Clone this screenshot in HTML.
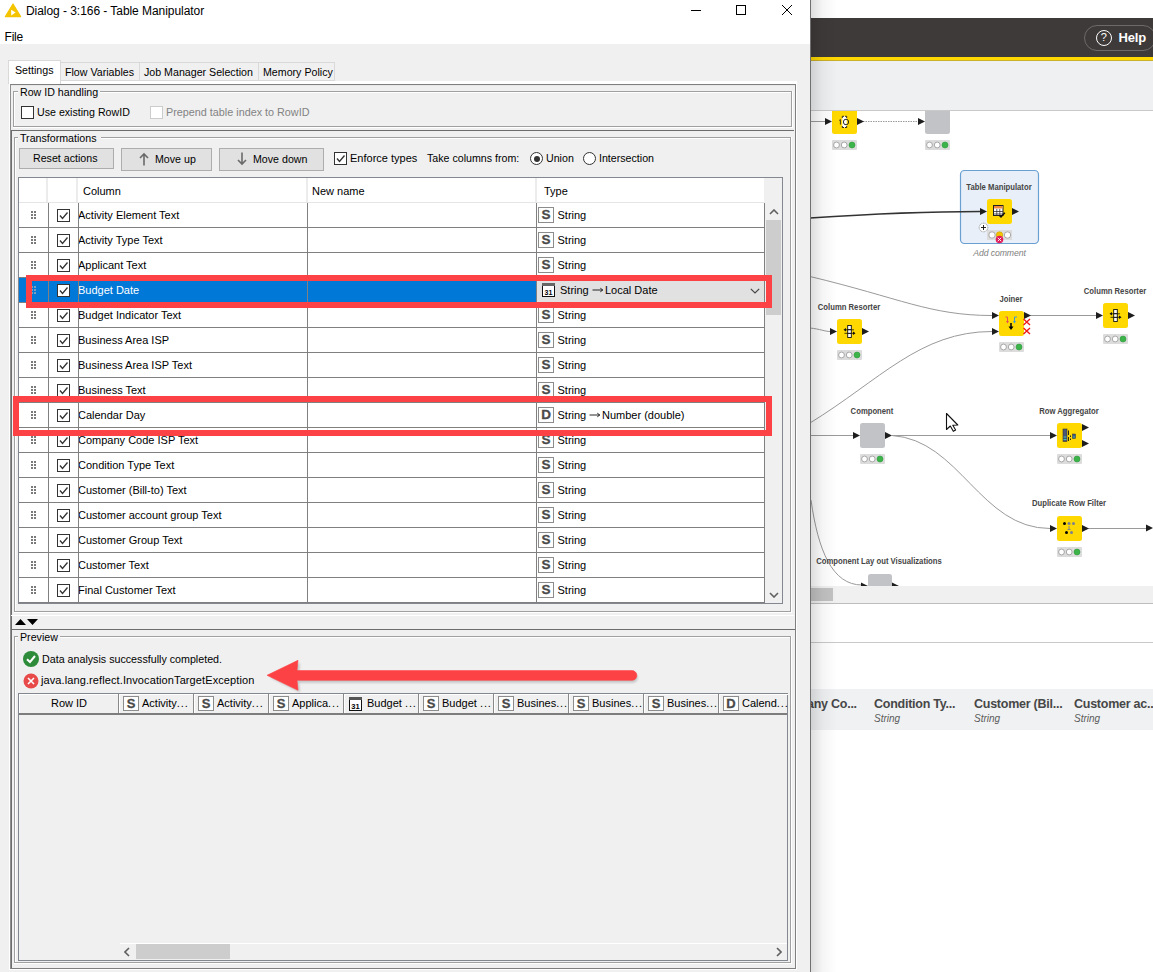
<!DOCTYPE html><html><head><meta charset="utf-8"><style>
*{box-sizing:border-box;margin:0;padding:0}
html,body{width:1153px;height:972px;overflow:hidden;background:#fff;font-family:"Liberation Sans",sans-serif;color:#000}
.ab{position:absolute}
.t{position:absolute;white-space:nowrap;font-size:11px;line-height:13px;letter-spacing:-0.2px}
.cb{position:absolute;width:13px;height:13px;border:1px solid #333;background:#fff}
.ti{position:absolute;width:15px;height:14px;border:1px solid #8c8c8c;background:#fff;font-weight:bold;font-size:13px;line-height:12px;text-align:center;color:#555}
.lbl{position:absolute;white-space:nowrap;font-size:9.5px;font-weight:bold;color:#454545;transform:translateX(-50%) scaleX(0.855);line-height:12px}
.node{position:absolute;width:25px;height:24px;border-radius:3px;background:#ffd800}
.stat{position:absolute;width:25px;height:10px;background:#dcdcdc}
</style></head><body>

<div class="ab" style="left:810px;top:0px;width:343px;height:972px;background:#fff"></div>
<div class="ab" style="left:810px;top:18px;width:343px;height:39px;background:#3e3a39"></div>
<div class="ab" style="left:810px;top:57px;width:343px;height:3px;background:#ffd800"></div>
<div class="ab" style="left:810px;top:60px;width:343px;height:50px;background:#eff0f2"></div>
<div class="ab" style="left:810px;top:60px;width:343px;height:1px;background:#cbb02a"></div>
<div class="ab" style="left:810px;top:110px;width:343px;height:1px;background:#c9c9c9"></div>
<div class="ab" style="left:1084px;top:25px;width:72px;height:26px;border:1px solid #6d6a69;border-radius:13px"></div>
<div class="ab" style="left:1096px;top:29.5px;width:16px;height:16px;border:1.3px solid #fff;border-radius:50%"></div>
<div class="t" style="left:1100.8px;top:31px;color:#fff;font-size:11px;line-height:13px">?</div>
<div class="t" style="left:1118.5px;top:29.8px;color:#fff;font-size:13px;font-weight:bold;line-height:16px;letter-spacing:-0.2px">Help</div>
<svg class="ab" style="left:810px;top:111px" width="343" height="475" viewBox="810 111 343 475"><rect x="960.5" y="170.5" width="78" height="73" rx="4" fill="#e8eff8" stroke="#6a9fd2" stroke-width="1.2"/><g fill="none" stroke="#9a9a9a" stroke-width="1"><path d="M810 276.5 C 900 298, 930 315.5, 992 315.5"/><path d="M810 328 C 820 329, 825 331.5, 830 331.5"/><path d="M810 423 C 880 380, 920 331.5, 992 331.5"/><path d="M810 435.5 L 853 435.5"/><path d="M892 435.5 L 1050 435.5"/><path d="M892 435.5 C 960 440, 980 528.5, 1050 528.5"/><path d="M1030 315.5 L 1096 315.5"/><path d="M1088 528.5 L 1146 528.5"/><path d="M811 500 C 818 550, 832 585, 862 585"/><path d="M810 121.5 L 825 121.5"/></g><path d="M863 121.5 L 918 121.5" stroke="#9a9a9a" stroke-dasharray="1.5 1" fill="none"/><path d="M810 218 C 870 214, 930 211.5, 980 211.5" stroke="#333" stroke-width="1.6" fill="none"/><rect x="832" y="109" width="25" height="25" rx="2.5" fill="#ffd800"/><path d="M825 118.0 L832 121.5 L825 125.0Z" fill="#1e1e1e"/><path d="M857 118.0 L864 121.5 L857 125.0Z" fill="#1e1e1e"/><rect x="832" y="140" width="25" height="10" rx="1" fill="#dcdcdc"/><circle cx="836.5" cy="145" r="2.9" fill="#fff" stroke="#888" stroke-width="0.7"/><circle cx="844.2" cy="145" r="2.9" fill="#fff" stroke="#888" stroke-width="0.7"/><circle cx="852" cy="145" r="3" fill="#3cb44a" stroke="#2e9a3c" stroke-width="0.6"/><rect x="925" y="109" width="25" height="25" rx="2.5" fill="#c1c3c6"/><path d="M918 118.0 L925 121.5 L918 125.0Z" fill="#1e1e1e"/><rect x="925" y="140" width="25" height="10" rx="1" fill="#dcdcdc"/><circle cx="929.5" cy="145" r="2.9" fill="#fff" stroke="#888" stroke-width="0.7"/><circle cx="937.2" cy="145" r="2.9" fill="#fff" stroke="#888" stroke-width="0.7"/><circle cx="945" cy="145" r="3" fill="#3cb44a" stroke="#2e9a3c" stroke-width="0.6"/><rect x="987" y="199" width="25" height="25" rx="2.5" fill="#ffd800"/><path d="M980 208.0 L987 211.5 L980 215.0Z" fill="#1e1e1e"/><path d="M1012 208.0 L1019 211.5 L1012 215.0Z" fill="#1e1e1e"/><rect x="837" y="319" width="25" height="25" rx="2.5" fill="#ffd800"/><path d="M830 328.0 L837 331.5 L830 335.0Z" fill="#1e1e1e"/><path d="M862 328.0 L869 331.5 L862 335.0Z" fill="#1e1e1e"/><rect x="837" y="350" width="25" height="10" rx="1" fill="#dcdcdc"/><circle cx="841.5" cy="355" r="2.9" fill="#fff" stroke="#888" stroke-width="0.7"/><circle cx="849.2" cy="355" r="2.9" fill="#fff" stroke="#888" stroke-width="0.7"/><circle cx="857" cy="355" r="3" fill="#3cb44a" stroke="#2e9a3c" stroke-width="0.6"/><rect x="999" y="311" width="25" height="25" rx="2.5" fill="#ffd800"/><path d="M992 312.0 L999 315.5 L992 319.0Z" fill="#1e1e1e"/><path d="M992 328.0 L999 331.5 L992 335.0Z" fill="#1e1e1e"/><path d="M1024 312.0 L1031 315.5 L1024 319.0Z" fill="#1e1e1e"/><rect x="999" y="342" width="25" height="10" rx="1" fill="#dcdcdc"/><circle cx="1003.5" cy="347" r="2.9" fill="#fff" stroke="#888" stroke-width="0.7"/><circle cx="1011.2" cy="347" r="2.9" fill="#fff" stroke="#888" stroke-width="0.7"/><circle cx="1019" cy="347" r="3" fill="#3cb44a" stroke="#2e9a3c" stroke-width="0.6"/><rect x="1103" y="303" width="25" height="25" rx="2.5" fill="#ffd800"/><path d="M1096 312.0 L1103 315.5 L1096 319.0Z" fill="#1e1e1e"/><path d="M1128 312.0 L1135 315.5 L1128 319.0Z" fill="#1e1e1e"/><rect x="1103" y="334" width="25" height="10" rx="1" fill="#dcdcdc"/><circle cx="1107.5" cy="339" r="2.9" fill="#fff" stroke="#888" stroke-width="0.7"/><circle cx="1115.2" cy="339" r="2.9" fill="#fff" stroke="#888" stroke-width="0.7"/><circle cx="1123" cy="339" r="3" fill="#3cb44a" stroke="#2e9a3c" stroke-width="0.6"/><rect x="860" y="423" width="25" height="25" rx="2.5" fill="#c1c3c6"/><path d="M853 432.0 L860 435.5 L853 439.0Z" fill="#1e1e1e"/><path d="M885 432.0 L892 435.5 L885 439.0Z" fill="#1e1e1e"/><rect x="860" y="454" width="25" height="10" rx="1" fill="#dcdcdc"/><circle cx="864.5" cy="459" r="2.9" fill="#fff" stroke="#888" stroke-width="0.7"/><circle cx="872.2" cy="459" r="2.9" fill="#fff" stroke="#888" stroke-width="0.7"/><circle cx="880" cy="459" r="3" fill="#3cb44a" stroke="#2e9a3c" stroke-width="0.6"/><rect x="1057" y="423" width="25" height="25" rx="2.5" fill="#ffd800"/><path d="M1050 432.0 L1057 435.5 L1050 439.0Z" fill="#1e1e1e"/><path d="M1082 424.0 L1089 427.5 L1082 431.0Z" fill="#1e1e1e"/><path d="M1082 440.0 L1089 443.5 L1082 447.0Z" fill="#1e1e1e"/><rect x="1057" y="454" width="25" height="10" rx="1" fill="#dcdcdc"/><circle cx="1061.5" cy="459" r="2.9" fill="#fff" stroke="#888" stroke-width="0.7"/><circle cx="1069.2" cy="459" r="2.9" fill="#fff" stroke="#888" stroke-width="0.7"/><circle cx="1077" cy="459" r="3" fill="#3cb44a" stroke="#2e9a3c" stroke-width="0.6"/><rect x="1057" y="516" width="25" height="25" rx="2.5" fill="#ffd800"/><path d="M1050 525.0 L1057 528.5 L1050 532.0Z" fill="#1e1e1e"/><path d="M1082 525.0 L1089 528.5 L1082 532.0Z" fill="#1e1e1e"/><rect x="1057" y="547" width="25" height="10" rx="1" fill="#dcdcdc"/><circle cx="1061.5" cy="552" r="2.9" fill="#fff" stroke="#888" stroke-width="0.7"/><circle cx="1069.2" cy="552" r="2.9" fill="#fff" stroke="#888" stroke-width="0.7"/><circle cx="1077" cy="552" r="3" fill="#3cb44a" stroke="#2e9a3c" stroke-width="0.6"/><rect x="868" y="574" width="24" height="20" rx="2.5" fill="#c1c3c6"/><path d="M861 582.5 L868 586 L861 589.5Z" fill="#1e1e1e"/><path d="M892 582.5 L899 586 L892 589.5Z" fill="#1e1e1e"/><rect x="987" y="230" width="25" height="10" fill="#dcdcdc"/><circle cx="992" cy="235" r="3.2" fill="#fff" stroke="#8a8a8a" stroke-width="0.7"/><circle cx="999.5" cy="235" r="3.2" fill="#f5c400" stroke="#d0a800" stroke-width="0.7"/><circle cx="1007.5" cy="235" r="3.2" fill="#fff" stroke="#8a8a8a" stroke-width="0.7"/><circle cx="999.5" cy="239.5" r="3.8" fill="#e0205a"/><path d="M997.8 237.8 L1001.2 241.2 M1001.2 237.8 L997.8 241.2" stroke="#fff" stroke-width="0.9"/><circle cx="983.5" cy="227.5" r="4.3" fill="#fff" stroke="#777" stroke-width="0.7" stroke-dasharray="1 0.6"/><path d="M981 227.5 H986 M983.5 225 V230" stroke="#111" stroke-width="0.9"/><path d="M839.2 120.5 L840.4 119.5 V124.6" stroke="#222" stroke-width="0.9" fill="none"/><rect x="842.3" y="116.3" width="4.4" height="11.2" fill="#fff"/><path d="M842.3 118 V116.3 H844 M845 116.3 H846.7 V118 M842.3 126 V127.5 H844 M845 127.5 H846.7 V126" stroke="#111" stroke-width="0.9" fill="none"/><ellipse cx="846" cy="122" rx="2.6" ry="2.8" fill="none" stroke="#111" stroke-width="0.9"/><rect x="993.5" y="205.5" width="9.5" height="10" fill="#fff" stroke="#222" stroke-width="1"/><rect x="994" y="206" width="8.5" height="2.5" fill="#f08a3c"/><path d="M994 211.5 H1003 M994 214 H1003 M996.8 209 V215.5 M999.8 209 V215.5" stroke="#333" stroke-width="0.8"/><path d="M999.5 215.5 L1001 217 L1004.8 212.8" stroke="#111" stroke-width="1.5" fill="none"/><rect x="847.7" y="325.5" width="3.6" height="12" fill="#fff" stroke="#111" stroke-width="0.9"/><path d="M847.7 329.5 H851.3 M847.7 333.5 H851.3" stroke="#111" stroke-width="0.8"/><path d="M844.5 329.8 H854.0 M844.5 333.3 H854.5" stroke="#111" stroke-width="0.8"/><path d="M843.5 329.8 L846.0 328.0 L846.0 331.6Z M855.5 333.3 L853.0 331.5 L853.0 335.1Z" fill="#111"/><rect x="1113.7" y="309.5" width="3.6" height="12" fill="#fff" stroke="#111" stroke-width="0.9"/><path d="M1113.7 313.5 H1117.3 M1113.7 317.5 H1117.3" stroke="#111" stroke-width="0.8"/><path d="M1110.5 313.8 H1120.0 M1110.5 317.3 H1120.5" stroke="#111" stroke-width="0.8"/><path d="M1109.5 313.8 L1112.0 312.0 L1112.0 315.6Z M1121.5 317.3 L1119.0 315.5 L1119.0 319.1Z" fill="#111"/><path d="M1005.5 317 H1007.5 V322" stroke="#e8505a" stroke-width="1" fill="none"/><path d="M1006 321 L1007.5 323.5 L1009 321Z" fill="#e8505a"/><path d="M1017 317 H1014.5 V322" stroke="#3a9ad8" stroke-width="1" fill="none"/><path d="M1013 321 L1014.5 323.5 L1016 321Z" fill="#3a9ad8"/><path d="M1011 323 V328" stroke="#000" stroke-width="1.5"/><path d="M1008.5 326.5 L1011 330 L1013.5 326.5Z" fill="#000"/><path d="M1023.5 319 L1030 325 M1030 319 L1023.5 325 M1023.5 328 L1030 334 M1030 328 L1023.5 334" stroke="#f01a1a" stroke-width="1.4"/><rect x="1063" y="429" width="4" height="12.5" fill="#4a5878" stroke="#333" stroke-width="0.6"/><path d="M1063.5 437 H1066.5 M1063.5 439.5 H1066.5" stroke="#3cc0c0" stroke-width="1"/><path d="M1068.5 430.5 V435 M1068.5 437 V441 M1070.5 435.5 V437 M1070.5 438.5 V440" stroke="#111" stroke-width="0.9"/><rect x="1072.5" y="434" width="3" height="4.5" fill="#3a5a88" stroke="#333" stroke-width="0.5"/><path d="M1073 437 H1075" stroke="#3cc0c0" stroke-width="0.8"/><circle cx="1064.5" cy="523.4" r="1.5" fill="#000"/><circle cx="1069" cy="523.4" r="1.5" fill="#7a8090"/><circle cx="1073.5" cy="523.4" r="1.5" fill="#7a8090"/><circle cx="1066.5" cy="532.5" r="1.5" fill="#000"/><circle cx="1071.5" cy="532.5" r="1.5" fill="#7a8090"/><path d="M1069 526 V529.5 M1067.5 529.5 H1070.5" stroke="#7a8090" stroke-width="0.9"/></svg>
<div class="lbl" style="left:999px;top:181px;transform:translateX(-50%) scaleX(0.81)">Table Manipulator</div>
<div class="lbl" style="left:849px;top:301px;transform:translateX(-50%) scaleX(0.81)">Column Resorter</div>
<div class="lbl" style="left:1011px;top:293px;transform:translateX(-50%) scaleX(0.81)">Joiner</div>
<div class="lbl" style="left:1115px;top:285px;transform:translateX(-50%) scaleX(0.81)">Column Resorter</div>
<div class="lbl" style="left:872px;top:405px;transform:translateX(-50%) scaleX(0.81)">Component</div>
<div class="lbl" style="left:1069px;top:405px;transform:translateX(-50%) scaleX(0.81)">Row Aggregator</div>
<div class="lbl" style="left:1069px;top:497px;transform:translateX(-50%) scaleX(0.81)">Duplicate Row Filter</div>
<div class="lbl" style="left:879px;top:555px;transform:translateX(-50%) scaleX(0.81)">Component Lay out Visualizations</div>
<div class="t" style="left:999.5px;top:246.5px;transform:translateX(-50%);font-size:8.7px;font-style:italic;color:#808080;letter-spacing:-0.1px">Add comment</div>
<div class="ab" style="left:810px;top:586px;width:343px;height:17px;background:#f0f0f0"></div>
<div class="ab" style="left:810px;top:588px;width:23px;height:13px;background:#c2c2c2"></div>
<div class="ab" style="left:810px;top:603px;width:343px;height:1px;background:#bdbdbd"></div>
<div class="ab" style="left:810px;top:642px;width:343px;height:1px;background:#c9c9c9"></div>
<div class="ab" style="left:810px;top:689px;width:343px;height:41px;background:#f0f1f3"></div>
<div class="t" style="left:807px;top:698px;font-size:12.5px;font-weight:bold;color:#474747;letter-spacing:-0.25px">any Co...</div>
<div class="t" style="left:874px;top:698px;font-size:12.5px;font-weight:bold;color:#474747;letter-spacing:-0.25px">Condition Ty...</div>
<div class="t" style="left:874px;top:712px;font-size:10px;font-style:italic;color:#5a5a5a;letter-spacing:0">String</div>
<div class="t" style="left:974px;top:698px;font-size:12.5px;font-weight:bold;color:#474747;letter-spacing:-0.25px">Customer (Bil...</div>
<div class="t" style="left:974px;top:712px;font-size:10px;font-style:italic;color:#5a5a5a;letter-spacing:0">String</div>
<div class="t" style="left:1074px;top:698px;font-size:12.5px;font-weight:bold;color:#474747;letter-spacing:-0.25px">Customer ac...</div>
<div class="t" style="left:1074px;top:712px;font-size:10px;font-style:italic;color:#5a5a5a;letter-spacing:0">String</div>
<div class="ab" style="left:811px;top:0px;width:26px;height:972px;background:linear-gradient(to right,rgba(0,0,0,0.13),rgba(0,0,0,0.04) 45%,rgba(0,0,0,0))"></div>
<svg class="ab" style="left:935px;top:405px" width="30" height="30" viewBox="935 405 30 30"><path d="M946.5 413.5 L946.5 429.5 L950.3 426 L953.3 431.3 L955.6 430 L952.8 425.2 L957.8 425 Z" fill="#fff" stroke="#111" stroke-width="1.1" stroke-linejoin="round"/></svg>
<svg class="ab" style="left:1140px;top:520px" width="13" height="16"><path d="M6 4.5 L13 8 L6 11.5Z" fill="#1e1e1e"/></svg>

<div class="ab" style="left:0px;top:0px;width:811px;height:972px;background:#f0f0f0"></div>
<div class="ab" style="left:0px;top:0px;width:810px;height:44px;background:#fff"></div>
<div class="ab" style="left:810px;top:0px;width:1px;height:972px;background:#707070"></div>
<svg class="ab" style="left:4px;top:3px" width="18" height="15"><path d="M9 1 L16.6 13.6 L1.4 13.6Z" fill="#f5c400" stroke="#f5c400" stroke-width="1.2" stroke-linejoin="round"/><path d="M7.2 6.8 L11.6 9.6 L7.2 12.4Z" fill="#fff"/></svg>
<div class="t" style="left:26px;top:4px;font-size:12px;line-height:15px;letter-spacing:-0.05px">Dialog - 3:166 - Table Manipulator</div>
<div class="ab" style="left:691px;top:10px;width:10px;height:1px;background:#000"></div>
<div class="ab" style="left:736px;top:5px;width:10px;height:10px;border:1px solid #000"></div>
<svg class="ab" style="left:782px;top:5px" width="10" height="10"><path d="M0 0L10 10M10 0L0 10" stroke="#000" stroke-width="1"/></svg>
<div class="t" style="left:4.5px;top:29.5px;font-size:12px;line-height:15px">File</div>
<div class="ab" style="left:60px;top:62px;width:80px;height:19px;background:#f0f0f0;border:1px solid #d9d9d9"></div>
<div class="t" style="left:65px;top:66px;font-size:10.65px;letter-spacing:0">Flow Variables</div>
<div class="ab" style="left:139px;top:62px;width:120px;height:19px;background:#f0f0f0;border:1px solid #d9d9d9"></div>
<div class="t" style="left:144px;top:66px;font-size:10.65px;letter-spacing:0">Job Manager Selection</div>
<div class="ab" style="left:258px;top:62px;width:77px;height:19px;background:#f0f0f0;border:1px solid #d9d9d9"></div>
<div class="t" style="left:263px;top:66px;font-size:10.65px;letter-spacing:0">Memory Policy</div>
<div class="ab" style="left:9px;top:81px;width:788px;height:889px;border:1px solid #fff;border-top:3px solid #fff"></div>
<div class="ab" style="left:10px;top:84px;width:786px;height:885px;border:1px solid #7f7f7f;border-left-color:#8f8f8f"></div>
<div class="ab" style="left:11px;top:85px;width:784px;height:883px;border-top:1px solid #e8e8e8"></div>
<div class="ab" style="left:11px;top:130px;width:1px;height:838px;background:#6d6d6d"></div>
<div class="ab" style="left:8px;top:60px;width:53px;height:24px;background:#fff;border:1px solid #d9d9d9;border-bottom:none"></div>
<div class="t" style="left:15px;top:64px;font-size:10.65px;letter-spacing:0">Settings</div>
<div class="ab" style="left:13px;top:91px;width:779px;height:36px;border:1px solid #a0a0a0"></div>
<div class="ab" style="left:14px;top:92px;width:777px;height:34px;border:1px solid #fff;border-right:none;border-bottom:none"></div>
<div class="ab" style="left:13px;top:127px;width:780px;height:1px;background:#fff"></div>
<div class="ab" style="left:792px;top:91px;width:1px;height:37px;background:#fff"></div>
<div class="ab" style="left:18px;top:89px;width:82px;height:5px;background:#f0f0f0"></div>
<div class="t" style="left:20px;top:86px;font-size:10.65px;letter-spacing:0">Row ID handling</div>
<div class="ab" style="left:21px;top:106px;width:13px;height:13px;border:1px solid #333;background:#fff"></div>
<div class="t" style="left:37px;top:106px;font-size:10.65px;letter-spacing:0">Use existing RowID</div>
<div class="ab" style="left:150px;top:106px;width:13px;height:13px;border:1px solid #cccccc;background:#fff"></div>
<div class="t" style="left:166px;top:106px;font-size:10.65px;letter-spacing:0;color:#838383;font-size:10.8px">Prepend table index to RowID</div>
<div class="ab" style="left:11px;top:130px;width:783px;height:1px;background:#6d6d6d"></div>
<div class="ab" style="left:14px;top:137px;width:777px;height:475px;border:1px solid #a0a0a0"></div>
<div class="ab" style="left:15px;top:138px;width:775px;height:473px;border:1px solid #fff;border-right:none;border-bottom:none"></div>
<div class="ab" style="left:14px;top:612px;width:778px;height:1px;background:#fff"></div>
<div class="ab" style="left:791px;top:137px;width:1px;height:476px;background:#fff"></div>
<div class="ab" style="left:18px;top:135px;width:83px;height:5px;background:#f0f0f0"></div>
<div class="t" style="left:20px;top:132px;font-size:10.65px;letter-spacing:0">Transformations</div>
<div class="ab" style="left:19px;top:148px;width:95px;height:21px;background:#e1e1e1;border:1px solid #adadad"></div>
<div class="t" style="left:33px;top:152px;font-size:10.65px;letter-spacing:0">Reset actions</div>
<div class="ab" style="left:121px;top:148px;width:91px;height:23px;background:#e1e1e1;border:1px solid #adadad"></div>
<div class="t" style="left:155px;top:153px;font-size:10.65px;letter-spacing:0">Move up</div>
<div class="ab" style="left:219px;top:148px;width:105px;height:23px;background:#e1e1e1;border:1px solid #adadad"></div>
<div class="t" style="left:253px;top:153px;font-size:10.65px;letter-spacing:0">Move down</div>
<svg class="ab" style="left:139px;top:152px" width="10" height="14"><path d="M5 2 V13.5 M1 6 L5 2 L9 6" stroke="#6a6a6a" stroke-width="1.6" fill="none"/></svg>
<svg class="ab" style="left:237px;top:152px" width="10" height="14"><path d="M5 0.5 V12 M1 8 L5 12 L9 8" stroke="#6a6a6a" stroke-width="1.6" fill="none"/></svg>
<div class="ab" style="left:334px;top:152px;width:13px;height:13px;border:1px solid #333;background:#fff"></div>
<svg class="ab" style="left:335px;top:153px" width="11" height="11"><path d="M2 5.5 L4.5 8.5 L9.5 2.5" stroke="#333" stroke-width="1.35" fill="none"/></svg>
<div class="t" style="left:350px;top:152px;font-size:11px;letter-spacing:0">Enforce types</div>
<div class="t" style="left:427px;top:152px;font-size:10.65px;letter-spacing:0">Take columns from:</div>
<div class="ab" style="left:530px;top:152px;width:13px;height:13px;border:1px solid #333;border-radius:50%;background:#fff"></div>
<div class="ab" style="left:533.5px;top:155.5px;width:6px;height:6px;background:#333;border-radius:50%"></div>
<div class="t" style="left:546px;top:152px;font-size:10.65px;letter-spacing:0">Union</div>
<div class="ab" style="left:583px;top:152px;width:13px;height:13px;border:1px solid #333;border-radius:50%;background:#fff"></div>
<div class="t" style="left:599px;top:152px;font-size:10.65px;letter-spacing:0">Intersection</div>
<div class="ab" style="left:18px;top:177px;width:765px;height:427px;background:#f0f0f0;border:1px solid #828790"></div>
<div class="ab" style="left:19px;top:178px;width:745px;height:24px;background:#fff"></div>
<div class="ab" style="left:19px;top:202px;width:745px;height:1px;background:#e5e5e5"></div>
<div class="ab" style="left:46px;top:178px;width:2px;height:24px;background:#ececec"></div>
<div class="ab" style="left:76px;top:178px;width:2px;height:24px;background:#ececec"></div>
<div class="ab" style="left:306px;top:178px;width:2px;height:24px;background:#ececec"></div>
<div class="ab" style="left:535px;top:178px;width:2px;height:24px;background:#ececec"></div>
<div class="t" style="left:83px;top:185px;font-size:11px;letter-spacing:0">Column</div>
<div class="t" style="left:312px;top:185px;font-size:11px;letter-spacing:0">New name</div>
<div class="t" style="left:544px;top:185px;font-size:11px;letter-spacing:0">Type</div>
<div class="ab" style="left:19px;top:203px;width:746px;height:399px;background:#fff"></div>
<div class="ab" style="left:19px;top:227px;width:746px;height:1px;background:#808080"></div>
<div class="ab" style="left:31px;top:211px;width:2px;height:2px;background:#7a7a7a"></div>
<div class="ab" style="left:31px;top:214px;width:2px;height:2px;background:#7a7a7a"></div>
<div class="ab" style="left:31px;top:217px;width:2px;height:2px;background:#7a7a7a"></div>
<div class="ab" style="left:34px;top:211px;width:2px;height:2px;background:#7a7a7a"></div>
<div class="ab" style="left:34px;top:214px;width:2px;height:2px;background:#7a7a7a"></div>
<div class="ab" style="left:34px;top:217px;width:2px;height:2px;background:#7a7a7a"></div>
<div class="ab" style="left:57px;top:209px;width:13px;height:13px;border:1px solid #333;background:#fff"></div>
<svg class="ab" style="left:58px;top:210px" width="11" height="11"><path d="M2 5.5 L4.5 8.5 L9.5 2.5" stroke="#333" stroke-width="1.3" fill="none"/></svg>
<div class="t" style="left:78px;top:209px;font-size:11px;letter-spacing:0">Activity Element Text</div>
<div class="ab" style="left:538px;top:207px;width:16px;height:16px;border:1px solid #8c8c8c;background:#fff"></div>
<div class="t" style="left:538px;top:207px;font-size:13.5px;font-weight:bold;color:#4a4a4a;width:16px;text-align:center;line-height:16px;letter-spacing:0;-webkit-text-stroke:0.3px #4a4a4a">S</div>
<div class="t" style="left:557.5px;top:209px;font-size:11px;letter-spacing:0">String</div>
<div class="ab" style="left:19px;top:252px;width:746px;height:1px;background:#808080"></div>
<div class="ab" style="left:31px;top:236px;width:2px;height:2px;background:#7a7a7a"></div>
<div class="ab" style="left:31px;top:239px;width:2px;height:2px;background:#7a7a7a"></div>
<div class="ab" style="left:31px;top:242px;width:2px;height:2px;background:#7a7a7a"></div>
<div class="ab" style="left:34px;top:236px;width:2px;height:2px;background:#7a7a7a"></div>
<div class="ab" style="left:34px;top:239px;width:2px;height:2px;background:#7a7a7a"></div>
<div class="ab" style="left:34px;top:242px;width:2px;height:2px;background:#7a7a7a"></div>
<div class="ab" style="left:57px;top:234px;width:13px;height:13px;border:1px solid #333;background:#fff"></div>
<svg class="ab" style="left:58px;top:235px" width="11" height="11"><path d="M2 5.5 L4.5 8.5 L9.5 2.5" stroke="#333" stroke-width="1.3" fill="none"/></svg>
<div class="t" style="left:78px;top:234px;font-size:11px;letter-spacing:0">Activity Type Text</div>
<div class="ab" style="left:538px;top:232px;width:16px;height:16px;border:1px solid #8c8c8c;background:#fff"></div>
<div class="t" style="left:538px;top:232px;font-size:13.5px;font-weight:bold;color:#4a4a4a;width:16px;text-align:center;line-height:16px;letter-spacing:0;-webkit-text-stroke:0.3px #4a4a4a">S</div>
<div class="t" style="left:557.5px;top:234px;font-size:11px;letter-spacing:0">String</div>
<div class="ab" style="left:19px;top:277px;width:746px;height:1px;background:#808080"></div>
<div class="ab" style="left:31px;top:261px;width:2px;height:2px;background:#7a7a7a"></div>
<div class="ab" style="left:31px;top:264px;width:2px;height:2px;background:#7a7a7a"></div>
<div class="ab" style="left:31px;top:267px;width:2px;height:2px;background:#7a7a7a"></div>
<div class="ab" style="left:34px;top:261px;width:2px;height:2px;background:#7a7a7a"></div>
<div class="ab" style="left:34px;top:264px;width:2px;height:2px;background:#7a7a7a"></div>
<div class="ab" style="left:34px;top:267px;width:2px;height:2px;background:#7a7a7a"></div>
<div class="ab" style="left:57px;top:259px;width:13px;height:13px;border:1px solid #333;background:#fff"></div>
<svg class="ab" style="left:58px;top:260px" width="11" height="11"><path d="M2 5.5 L4.5 8.5 L9.5 2.5" stroke="#333" stroke-width="1.3" fill="none"/></svg>
<div class="t" style="left:78px;top:259px;font-size:11px;letter-spacing:0">Applicant Text</div>
<div class="ab" style="left:538px;top:257px;width:16px;height:16px;border:1px solid #8c8c8c;background:#fff"></div>
<div class="t" style="left:538px;top:257px;font-size:13.5px;font-weight:bold;color:#4a4a4a;width:16px;text-align:center;line-height:16px;letter-spacing:0;-webkit-text-stroke:0.3px #4a4a4a">S</div>
<div class="t" style="left:557.5px;top:259px;font-size:11px;letter-spacing:0">String</div>
<div class="ab" style="left:19px;top:278px;width:517px;height:24px;background:#0078d7"></div>
<div class="ab" style="left:19px;top:302px;width:746px;height:1px;background:#808080"></div>
<div class="ab" style="left:31px;top:286px;width:2px;height:2px;background:#7f9fbf"></div>
<div class="ab" style="left:31px;top:289px;width:2px;height:2px;background:#7f9fbf"></div>
<div class="ab" style="left:31px;top:292px;width:2px;height:2px;background:#7f9fbf"></div>
<div class="ab" style="left:34px;top:286px;width:2px;height:2px;background:#7f9fbf"></div>
<div class="ab" style="left:34px;top:289px;width:2px;height:2px;background:#7f9fbf"></div>
<div class="ab" style="left:34px;top:292px;width:2px;height:2px;background:#7f9fbf"></div>
<div class="ab" style="left:57px;top:284px;width:13px;height:13px;border:1px solid #333;background:#fff"></div>
<svg class="ab" style="left:58px;top:285px" width="11" height="11"><path d="M2 5.5 L4.5 8.5 L9.5 2.5" stroke="#333" stroke-width="1.3" fill="none"/></svg>
<div class="t" style="left:78px;top:284px;font-size:11px;letter-spacing:0;color:#fff">Budget Date</div>
<div class="ab" style="left:536px;top:278px;width:229px;height:25px;background:#e1e1e1;border:1px solid #8a8a8a"></div>
<svg class="ab" style="left:542px;top:283px" width="14" height="14"><rect x="0.5" y="0.5" width="12" height="13" fill="#fff" stroke="#111"/><rect x="0" y="0" width="13" height="3" fill="#666"/><text x="6.5" y="11.5" font-size="7" font-weight="bold" text-anchor="middle" font-family="Liberation Sans">31</text></svg>
<div class="t" style="left:560px;top:284px;font-size:11px;letter-spacing:0">String</div>
<div class="t" style="left:605px;top:284px;font-size:11px;letter-spacing:0">Local Date</div>
<svg class="ab" style="left:592px;top:286px" width="12" height="8"><path d="M0.5 4 H10.5" stroke="#111" stroke-width="0.9"/><path d="M8.3 2.2 L10.8 4 L8.3 5.8" stroke="#111" stroke-width="0.9" fill="none"/></svg>
<svg class="ab" style="left:750px;top:288px" width="10" height="6"><path d="M0.8 0.8 L5 5 L9.2 0.8" stroke="#444" stroke-width="1.2" fill="none"/></svg>
<div class="ab" style="left:19px;top:327px;width:746px;height:1px;background:#808080"></div>
<div class="ab" style="left:31px;top:311px;width:2px;height:2px;background:#7a7a7a"></div>
<div class="ab" style="left:31px;top:314px;width:2px;height:2px;background:#7a7a7a"></div>
<div class="ab" style="left:31px;top:317px;width:2px;height:2px;background:#7a7a7a"></div>
<div class="ab" style="left:34px;top:311px;width:2px;height:2px;background:#7a7a7a"></div>
<div class="ab" style="left:34px;top:314px;width:2px;height:2px;background:#7a7a7a"></div>
<div class="ab" style="left:34px;top:317px;width:2px;height:2px;background:#7a7a7a"></div>
<div class="ab" style="left:57px;top:309px;width:13px;height:13px;border:1px solid #333;background:#fff"></div>
<svg class="ab" style="left:58px;top:310px" width="11" height="11"><path d="M2 5.5 L4.5 8.5 L9.5 2.5" stroke="#333" stroke-width="1.3" fill="none"/></svg>
<div class="t" style="left:78px;top:309px;font-size:11px;letter-spacing:0">Budget Indicator Text</div>
<div class="ab" style="left:538px;top:307px;width:16px;height:16px;border:1px solid #8c8c8c;background:#fff"></div>
<div class="t" style="left:538px;top:307px;font-size:13.5px;font-weight:bold;color:#4a4a4a;width:16px;text-align:center;line-height:16px;letter-spacing:0;-webkit-text-stroke:0.3px #4a4a4a">S</div>
<div class="t" style="left:557.5px;top:309px;font-size:11px;letter-spacing:0">String</div>
<div class="ab" style="left:19px;top:352px;width:746px;height:1px;background:#808080"></div>
<div class="ab" style="left:31px;top:336px;width:2px;height:2px;background:#7a7a7a"></div>
<div class="ab" style="left:31px;top:339px;width:2px;height:2px;background:#7a7a7a"></div>
<div class="ab" style="left:31px;top:342px;width:2px;height:2px;background:#7a7a7a"></div>
<div class="ab" style="left:34px;top:336px;width:2px;height:2px;background:#7a7a7a"></div>
<div class="ab" style="left:34px;top:339px;width:2px;height:2px;background:#7a7a7a"></div>
<div class="ab" style="left:34px;top:342px;width:2px;height:2px;background:#7a7a7a"></div>
<div class="ab" style="left:57px;top:334px;width:13px;height:13px;border:1px solid #333;background:#fff"></div>
<svg class="ab" style="left:58px;top:335px" width="11" height="11"><path d="M2 5.5 L4.5 8.5 L9.5 2.5" stroke="#333" stroke-width="1.3" fill="none"/></svg>
<div class="t" style="left:78px;top:334px;font-size:11px;letter-spacing:0">Business Area ISP</div>
<div class="ab" style="left:538px;top:332px;width:16px;height:16px;border:1px solid #8c8c8c;background:#fff"></div>
<div class="t" style="left:538px;top:332px;font-size:13.5px;font-weight:bold;color:#4a4a4a;width:16px;text-align:center;line-height:16px;letter-spacing:0;-webkit-text-stroke:0.3px #4a4a4a">S</div>
<div class="t" style="left:557.5px;top:334px;font-size:11px;letter-spacing:0">String</div>
<div class="ab" style="left:19px;top:377px;width:746px;height:1px;background:#808080"></div>
<div class="ab" style="left:31px;top:361px;width:2px;height:2px;background:#7a7a7a"></div>
<div class="ab" style="left:31px;top:364px;width:2px;height:2px;background:#7a7a7a"></div>
<div class="ab" style="left:31px;top:367px;width:2px;height:2px;background:#7a7a7a"></div>
<div class="ab" style="left:34px;top:361px;width:2px;height:2px;background:#7a7a7a"></div>
<div class="ab" style="left:34px;top:364px;width:2px;height:2px;background:#7a7a7a"></div>
<div class="ab" style="left:34px;top:367px;width:2px;height:2px;background:#7a7a7a"></div>
<div class="ab" style="left:57px;top:359px;width:13px;height:13px;border:1px solid #333;background:#fff"></div>
<svg class="ab" style="left:58px;top:360px" width="11" height="11"><path d="M2 5.5 L4.5 8.5 L9.5 2.5" stroke="#333" stroke-width="1.3" fill="none"/></svg>
<div class="t" style="left:78px;top:359px;font-size:11px;letter-spacing:0">Business Area ISP Text</div>
<div class="ab" style="left:538px;top:357px;width:16px;height:16px;border:1px solid #8c8c8c;background:#fff"></div>
<div class="t" style="left:538px;top:357px;font-size:13.5px;font-weight:bold;color:#4a4a4a;width:16px;text-align:center;line-height:16px;letter-spacing:0;-webkit-text-stroke:0.3px #4a4a4a">S</div>
<div class="t" style="left:557.5px;top:359px;font-size:11px;letter-spacing:0">String</div>
<div class="ab" style="left:19px;top:402px;width:746px;height:1px;background:#808080"></div>
<div class="ab" style="left:31px;top:386px;width:2px;height:2px;background:#7a7a7a"></div>
<div class="ab" style="left:31px;top:389px;width:2px;height:2px;background:#7a7a7a"></div>
<div class="ab" style="left:31px;top:392px;width:2px;height:2px;background:#7a7a7a"></div>
<div class="ab" style="left:34px;top:386px;width:2px;height:2px;background:#7a7a7a"></div>
<div class="ab" style="left:34px;top:389px;width:2px;height:2px;background:#7a7a7a"></div>
<div class="ab" style="left:34px;top:392px;width:2px;height:2px;background:#7a7a7a"></div>
<div class="ab" style="left:57px;top:384px;width:13px;height:13px;border:1px solid #333;background:#fff"></div>
<svg class="ab" style="left:58px;top:385px" width="11" height="11"><path d="M2 5.5 L4.5 8.5 L9.5 2.5" stroke="#333" stroke-width="1.3" fill="none"/></svg>
<div class="t" style="left:78px;top:384px;font-size:11px;letter-spacing:0">Business Text</div>
<div class="ab" style="left:538px;top:382px;width:16px;height:16px;border:1px solid #8c8c8c;background:#fff"></div>
<div class="t" style="left:538px;top:382px;font-size:13.5px;font-weight:bold;color:#4a4a4a;width:16px;text-align:center;line-height:16px;letter-spacing:0;-webkit-text-stroke:0.3px #4a4a4a">S</div>
<div class="t" style="left:557.5px;top:384px;font-size:11px;letter-spacing:0">String</div>
<div class="ab" style="left:19px;top:427px;width:746px;height:1px;background:#808080"></div>
<div class="ab" style="left:31px;top:411px;width:2px;height:2px;background:#7a7a7a"></div>
<div class="ab" style="left:31px;top:414px;width:2px;height:2px;background:#7a7a7a"></div>
<div class="ab" style="left:31px;top:417px;width:2px;height:2px;background:#7a7a7a"></div>
<div class="ab" style="left:34px;top:411px;width:2px;height:2px;background:#7a7a7a"></div>
<div class="ab" style="left:34px;top:414px;width:2px;height:2px;background:#7a7a7a"></div>
<div class="ab" style="left:34px;top:417px;width:2px;height:2px;background:#7a7a7a"></div>
<div class="ab" style="left:57px;top:409px;width:13px;height:13px;border:1px solid #333;background:#fff"></div>
<svg class="ab" style="left:58px;top:410px" width="11" height="11"><path d="M2 5.5 L4.5 8.5 L9.5 2.5" stroke="#333" stroke-width="1.3" fill="none"/></svg>
<div class="t" style="left:78px;top:409px;font-size:11px;letter-spacing:0">Calendar Day</div>
<div class="ab" style="left:538px;top:407px;width:16px;height:16px;border:1px solid #8c8c8c;background:#fff"></div>
<div class="t" style="left:538px;top:407px;font-size:13.5px;font-weight:bold;color:#4a4a4a;width:16px;text-align:center;line-height:16px;letter-spacing:0;-webkit-text-stroke:0.3px #4a4a4a">D</div>
<div class="t" style="left:557.5px;top:409px;font-size:11px;letter-spacing:0">String</div>
<div class="t" style="left:602px;top:409px;font-size:11px;letter-spacing:0">Number (double)</div>
<svg class="ab" style="left:589px;top:411px" width="12" height="8"><path d="M0.5 4 H10.5" stroke="#111" stroke-width="0.9"/><path d="M8.3 2.2 L10.8 4 L8.3 5.8" stroke="#111" stroke-width="0.9" fill="none"/></svg>
<div class="ab" style="left:19px;top:452px;width:746px;height:1px;background:#808080"></div>
<div class="ab" style="left:31px;top:436px;width:2px;height:2px;background:#7a7a7a"></div>
<div class="ab" style="left:31px;top:439px;width:2px;height:2px;background:#7a7a7a"></div>
<div class="ab" style="left:31px;top:442px;width:2px;height:2px;background:#7a7a7a"></div>
<div class="ab" style="left:34px;top:436px;width:2px;height:2px;background:#7a7a7a"></div>
<div class="ab" style="left:34px;top:439px;width:2px;height:2px;background:#7a7a7a"></div>
<div class="ab" style="left:34px;top:442px;width:2px;height:2px;background:#7a7a7a"></div>
<div class="ab" style="left:57px;top:434px;width:13px;height:13px;border:1px solid #333;background:#fff"></div>
<svg class="ab" style="left:58px;top:435px" width="11" height="11"><path d="M2 5.5 L4.5 8.5 L9.5 2.5" stroke="#333" stroke-width="1.3" fill="none"/></svg>
<div class="t" style="left:78px;top:434px;font-size:11px;letter-spacing:0">Company Code ISP Text</div>
<div class="ab" style="left:538px;top:432px;width:16px;height:16px;border:1px solid #8c8c8c;background:#fff"></div>
<div class="t" style="left:538px;top:432px;font-size:13.5px;font-weight:bold;color:#4a4a4a;width:16px;text-align:center;line-height:16px;letter-spacing:0;-webkit-text-stroke:0.3px #4a4a4a">S</div>
<div class="t" style="left:557.5px;top:434px;font-size:11px;letter-spacing:0">String</div>
<div class="ab" style="left:19px;top:477px;width:746px;height:1px;background:#808080"></div>
<div class="ab" style="left:31px;top:461px;width:2px;height:2px;background:#7a7a7a"></div>
<div class="ab" style="left:31px;top:464px;width:2px;height:2px;background:#7a7a7a"></div>
<div class="ab" style="left:31px;top:467px;width:2px;height:2px;background:#7a7a7a"></div>
<div class="ab" style="left:34px;top:461px;width:2px;height:2px;background:#7a7a7a"></div>
<div class="ab" style="left:34px;top:464px;width:2px;height:2px;background:#7a7a7a"></div>
<div class="ab" style="left:34px;top:467px;width:2px;height:2px;background:#7a7a7a"></div>
<div class="ab" style="left:57px;top:459px;width:13px;height:13px;border:1px solid #333;background:#fff"></div>
<svg class="ab" style="left:58px;top:460px" width="11" height="11"><path d="M2 5.5 L4.5 8.5 L9.5 2.5" stroke="#333" stroke-width="1.3" fill="none"/></svg>
<div class="t" style="left:78px;top:459px;font-size:11px;letter-spacing:0">Condition Type Text</div>
<div class="ab" style="left:538px;top:457px;width:16px;height:16px;border:1px solid #8c8c8c;background:#fff"></div>
<div class="t" style="left:538px;top:457px;font-size:13.5px;font-weight:bold;color:#4a4a4a;width:16px;text-align:center;line-height:16px;letter-spacing:0;-webkit-text-stroke:0.3px #4a4a4a">S</div>
<div class="t" style="left:557.5px;top:459px;font-size:11px;letter-spacing:0">String</div>
<div class="ab" style="left:19px;top:502px;width:746px;height:1px;background:#808080"></div>
<div class="ab" style="left:31px;top:486px;width:2px;height:2px;background:#7a7a7a"></div>
<div class="ab" style="left:31px;top:489px;width:2px;height:2px;background:#7a7a7a"></div>
<div class="ab" style="left:31px;top:492px;width:2px;height:2px;background:#7a7a7a"></div>
<div class="ab" style="left:34px;top:486px;width:2px;height:2px;background:#7a7a7a"></div>
<div class="ab" style="left:34px;top:489px;width:2px;height:2px;background:#7a7a7a"></div>
<div class="ab" style="left:34px;top:492px;width:2px;height:2px;background:#7a7a7a"></div>
<div class="ab" style="left:57px;top:484px;width:13px;height:13px;border:1px solid #333;background:#fff"></div>
<svg class="ab" style="left:58px;top:485px" width="11" height="11"><path d="M2 5.5 L4.5 8.5 L9.5 2.5" stroke="#333" stroke-width="1.3" fill="none"/></svg>
<div class="t" style="left:78px;top:484px;font-size:11px;letter-spacing:0">Customer (Bill-to) Text</div>
<div class="ab" style="left:538px;top:482px;width:16px;height:16px;border:1px solid #8c8c8c;background:#fff"></div>
<div class="t" style="left:538px;top:482px;font-size:13.5px;font-weight:bold;color:#4a4a4a;width:16px;text-align:center;line-height:16px;letter-spacing:0;-webkit-text-stroke:0.3px #4a4a4a">S</div>
<div class="t" style="left:557.5px;top:484px;font-size:11px;letter-spacing:0">String</div>
<div class="ab" style="left:19px;top:527px;width:746px;height:1px;background:#808080"></div>
<div class="ab" style="left:31px;top:511px;width:2px;height:2px;background:#7a7a7a"></div>
<div class="ab" style="left:31px;top:514px;width:2px;height:2px;background:#7a7a7a"></div>
<div class="ab" style="left:31px;top:517px;width:2px;height:2px;background:#7a7a7a"></div>
<div class="ab" style="left:34px;top:511px;width:2px;height:2px;background:#7a7a7a"></div>
<div class="ab" style="left:34px;top:514px;width:2px;height:2px;background:#7a7a7a"></div>
<div class="ab" style="left:34px;top:517px;width:2px;height:2px;background:#7a7a7a"></div>
<div class="ab" style="left:57px;top:509px;width:13px;height:13px;border:1px solid #333;background:#fff"></div>
<svg class="ab" style="left:58px;top:510px" width="11" height="11"><path d="M2 5.5 L4.5 8.5 L9.5 2.5" stroke="#333" stroke-width="1.3" fill="none"/></svg>
<div class="t" style="left:78px;top:509px;font-size:11px;letter-spacing:0">Customer account group Text</div>
<div class="ab" style="left:538px;top:507px;width:16px;height:16px;border:1px solid #8c8c8c;background:#fff"></div>
<div class="t" style="left:538px;top:507px;font-size:13.5px;font-weight:bold;color:#4a4a4a;width:16px;text-align:center;line-height:16px;letter-spacing:0;-webkit-text-stroke:0.3px #4a4a4a">S</div>
<div class="t" style="left:557.5px;top:509px;font-size:11px;letter-spacing:0">String</div>
<div class="ab" style="left:19px;top:552px;width:746px;height:1px;background:#808080"></div>
<div class="ab" style="left:31px;top:536px;width:2px;height:2px;background:#7a7a7a"></div>
<div class="ab" style="left:31px;top:539px;width:2px;height:2px;background:#7a7a7a"></div>
<div class="ab" style="left:31px;top:542px;width:2px;height:2px;background:#7a7a7a"></div>
<div class="ab" style="left:34px;top:536px;width:2px;height:2px;background:#7a7a7a"></div>
<div class="ab" style="left:34px;top:539px;width:2px;height:2px;background:#7a7a7a"></div>
<div class="ab" style="left:34px;top:542px;width:2px;height:2px;background:#7a7a7a"></div>
<div class="ab" style="left:57px;top:534px;width:13px;height:13px;border:1px solid #333;background:#fff"></div>
<svg class="ab" style="left:58px;top:535px" width="11" height="11"><path d="M2 5.5 L4.5 8.5 L9.5 2.5" stroke="#333" stroke-width="1.3" fill="none"/></svg>
<div class="t" style="left:78px;top:534px;font-size:11px;letter-spacing:0">Customer Group Text</div>
<div class="ab" style="left:538px;top:532px;width:16px;height:16px;border:1px solid #8c8c8c;background:#fff"></div>
<div class="t" style="left:538px;top:532px;font-size:13.5px;font-weight:bold;color:#4a4a4a;width:16px;text-align:center;line-height:16px;letter-spacing:0;-webkit-text-stroke:0.3px #4a4a4a">S</div>
<div class="t" style="left:557.5px;top:534px;font-size:11px;letter-spacing:0">String</div>
<div class="ab" style="left:19px;top:577px;width:746px;height:1px;background:#808080"></div>
<div class="ab" style="left:31px;top:561px;width:2px;height:2px;background:#7a7a7a"></div>
<div class="ab" style="left:31px;top:564px;width:2px;height:2px;background:#7a7a7a"></div>
<div class="ab" style="left:31px;top:567px;width:2px;height:2px;background:#7a7a7a"></div>
<div class="ab" style="left:34px;top:561px;width:2px;height:2px;background:#7a7a7a"></div>
<div class="ab" style="left:34px;top:564px;width:2px;height:2px;background:#7a7a7a"></div>
<div class="ab" style="left:34px;top:567px;width:2px;height:2px;background:#7a7a7a"></div>
<div class="ab" style="left:57px;top:559px;width:13px;height:13px;border:1px solid #333;background:#fff"></div>
<svg class="ab" style="left:58px;top:560px" width="11" height="11"><path d="M2 5.5 L4.5 8.5 L9.5 2.5" stroke="#333" stroke-width="1.3" fill="none"/></svg>
<div class="t" style="left:78px;top:559px;font-size:11px;letter-spacing:0">Customer Text</div>
<div class="ab" style="left:538px;top:557px;width:16px;height:16px;border:1px solid #8c8c8c;background:#fff"></div>
<div class="t" style="left:538px;top:557px;font-size:13.5px;font-weight:bold;color:#4a4a4a;width:16px;text-align:center;line-height:16px;letter-spacing:0;-webkit-text-stroke:0.3px #4a4a4a">S</div>
<div class="t" style="left:557.5px;top:559px;font-size:11px;letter-spacing:0">String</div>
<div class="ab" style="left:19px;top:602px;width:746px;height:1px;background:#808080"></div>
<div class="ab" style="left:31px;top:586px;width:2px;height:2px;background:#7a7a7a"></div>
<div class="ab" style="left:31px;top:589px;width:2px;height:2px;background:#7a7a7a"></div>
<div class="ab" style="left:31px;top:592px;width:2px;height:2px;background:#7a7a7a"></div>
<div class="ab" style="left:34px;top:586px;width:2px;height:2px;background:#7a7a7a"></div>
<div class="ab" style="left:34px;top:589px;width:2px;height:2px;background:#7a7a7a"></div>
<div class="ab" style="left:34px;top:592px;width:2px;height:2px;background:#7a7a7a"></div>
<div class="ab" style="left:57px;top:584px;width:13px;height:13px;border:1px solid #333;background:#fff"></div>
<svg class="ab" style="left:58px;top:585px" width="11" height="11"><path d="M2 5.5 L4.5 8.5 L9.5 2.5" stroke="#333" stroke-width="1.3" fill="none"/></svg>
<div class="t" style="left:78px;top:584px;font-size:11px;letter-spacing:0">Final Customer Text</div>
<div class="ab" style="left:538px;top:582px;width:16px;height:16px;border:1px solid #8c8c8c;background:#fff"></div>
<div class="t" style="left:538px;top:582px;font-size:13.5px;font-weight:bold;color:#4a4a4a;width:16px;text-align:center;line-height:16px;letter-spacing:0;-webkit-text-stroke:0.3px #4a4a4a">S</div>
<div class="t" style="left:557.5px;top:584px;font-size:11px;letter-spacing:0">String</div>
<div class="ab" style="left:48px;top:203px;width:1px;height:399px;background:#808080"></div>
<div class="ab" style="left:78px;top:203px;width:1px;height:399px;background:#808080"></div>
<div class="ab" style="left:307px;top:203px;width:1px;height:399px;background:#808080"></div>
<div class="ab" style="left:536px;top:203px;width:1px;height:399px;background:#808080"></div>
<div class="ab" style="left:764px;top:203px;width:1px;height:399px;background:#808080"></div>
<div class="ab" style="left:765px;top:178px;width:17px;height:424px;background:#f0f0f0"></div>
<div class="ab" style="left:766px;top:220px;width:15px;height:95px;background:#cdcdcd"></div>
<svg class="ab" style="left:769px;top:209px" width="10" height="6"><path d="M1 5 L5 1 L9 5" stroke="#606060" stroke-width="1.6" fill="none"/></svg>
<svg class="ab" style="left:769px;top:592px" width="10" height="6"><path d="M1 1 L5 5 L9 1" stroke="#606060" stroke-width="1.6" fill="none"/></svg>
<div class="ab" style="left:26px;top:275px;width:746px;height:33px;border:6px solid #fd4245"></div>
<div class="ab" style="left:13px;top:396px;width:759px;height:40px;border:6px solid #fd4245"></div>
<div class="ab" style="left:11px;top:615px;width:783px;height:1px;background:#fff"></div>
<svg class="ab" style="left:15px;top:618px" width="24" height="8"><path d="M0 7 L5.5 1 L11 7Z M12 1 L23 1 L17.5 7Z" fill="#000"/></svg>
<div class="ab" style="left:11px;top:629px;width:784px;height:1px;background:#6d6d6d"></div>
<div class="ab" style="left:14px;top:636px;width:777px;height:327px;border:1px solid #a0a0a0"></div>
<div class="ab" style="left:15px;top:637px;width:775px;height:325px;border:1px solid #fff;border-right:none;border-bottom:none"></div>
<div class="ab" style="left:14px;top:963px;width:778px;height:1px;background:#fff"></div>
<div class="ab" style="left:791px;top:636px;width:1px;height:328px;background:#fff"></div>
<div class="ab" style="left:18px;top:634px;width:42px;height:5px;background:#f0f0f0"></div>
<div class="t" style="left:20px;top:631px;font-size:10.65px;letter-spacing:0">Preview</div>
<svg class="ab" style="left:23px;top:651px" width="16" height="16"><circle cx="8" cy="8" r="8" fill="#2e8b3a"/><path d="M4 8.2 L7 11 L12 5" stroke="#fff" stroke-width="2" fill="none"/></svg>
<div class="t" style="left:42px;top:653px;font-size:11px;letter-spacing:0;font-size:10.7px">Data analysis successfully completed.</div>
<svg class="ab" style="left:23px;top:673px" width="16" height="16"><circle cx="8" cy="8" r="7.5" fill="#e84a4a"/><path d="M5 5 L11 11 M11 5 L5 11" stroke="#fff" stroke-width="1.6" fill="none"/></svg>
<div class="t" style="left:41px;top:674px;font-size:11px;letter-spacing:0;letter-spacing:0.1px">java.lang.reflect.InvocationTargetException</div>
<div class="ab" style="left:18px;top:693px;width:770px;height:268px;background:#f0f0f0;border:1px solid #828790"></div>
<div class="ab" style="left:19px;top:694px;width:768px;height:20px;background:#f0f0f0"></div>
<div class="ab" style="left:19px;top:713px;width:768px;height:2px;background:#7d7d7d"></div>
<div class="ab" style="left:19px;top:694px;width:100px;height:19px;border-left:1px solid #fff;border-top:1px solid #fff"></div>
<div class="ab" style="left:118px;top:694px;width:1px;height:19px;background:#8a8a8a"></div>
<div class="t" style="left:51px;top:697px;font-size:11px;letter-spacing:0">Row ID</div>
<div class="ab" style="left:119px;top:694px;width:75px;height:19px;border-left:1px solid #fff;border-top:1px solid #fff"></div>
<div class="ab" style="left:193px;top:694px;width:1px;height:19px;background:#8a8a8a"></div>
<div class="ab" style="left:123px;top:696px;width:16px;height:15px;border:1px solid #8c8c8c;background:#fff"></div>
<div class="t" style="left:123px;top:696px;font-size:13px;font-weight:bold;color:#4a4a4a;width:16px;text-align:center;line-height:16px;letter-spacing:0;-webkit-text-stroke:0.3px #4a4a4a">S</div>
<div class="t" style="left:142px;top:697px;font-size:11px;letter-spacing:0">Activity<span style="letter-spacing:0.9px">...</span></div>
<div class="ab" style="left:194px;top:694px;width:75px;height:19px;border-left:1px solid #fff;border-top:1px solid #fff"></div>
<div class="ab" style="left:268px;top:694px;width:1px;height:19px;background:#8a8a8a"></div>
<div class="ab" style="left:198px;top:696px;width:16px;height:15px;border:1px solid #8c8c8c;background:#fff"></div>
<div class="t" style="left:198px;top:696px;font-size:13px;font-weight:bold;color:#4a4a4a;width:16px;text-align:center;line-height:16px;letter-spacing:0;-webkit-text-stroke:0.3px #4a4a4a">S</div>
<div class="t" style="left:217px;top:697px;font-size:11px;letter-spacing:0">Activity<span style="letter-spacing:0.9px">...</span></div>
<div class="ab" style="left:269px;top:694px;width:75px;height:19px;border-left:1px solid #fff;border-top:1px solid #fff"></div>
<div class="ab" style="left:343px;top:694px;width:1px;height:19px;background:#8a8a8a"></div>
<div class="ab" style="left:273px;top:696px;width:16px;height:15px;border:1px solid #8c8c8c;background:#fff"></div>
<div class="t" style="left:273px;top:696px;font-size:13px;font-weight:bold;color:#4a4a4a;width:16px;text-align:center;line-height:16px;letter-spacing:0;-webkit-text-stroke:0.3px #4a4a4a">S</div>
<div class="t" style="left:292px;top:697px;font-size:11px;letter-spacing:0">Applica<span style="letter-spacing:0.9px">...</span></div>
<div class="ab" style="left:344px;top:694px;width:75px;height:19px;border-left:1px solid #fff;border-top:1px solid #fff"></div>
<div class="ab" style="left:418px;top:694px;width:1px;height:19px;background:#8a8a8a"></div>
<svg class="ab" style="left:348px;top:696px" width="16" height="16"><rect x="1.5" y="1.5" width="12" height="13" fill="#fff" stroke="#111"/><rect x="1" y="1" width="13" height="3" fill="#555"/><text x="7.5" y="12.5" font-size="7.5" font-weight="bold" text-anchor="middle" font-family="Liberation Sans">31</text></svg>
<div class="t" style="left:367px;top:697px;font-size:11px;letter-spacing:0">Budget <span style="letter-spacing:0.9px">...</span></div>
<div class="ab" style="left:419px;top:694px;width:75px;height:19px;border-left:1px solid #fff;border-top:1px solid #fff"></div>
<div class="ab" style="left:493px;top:694px;width:1px;height:19px;background:#8a8a8a"></div>
<div class="ab" style="left:423px;top:696px;width:16px;height:15px;border:1px solid #8c8c8c;background:#fff"></div>
<div class="t" style="left:423px;top:696px;font-size:13px;font-weight:bold;color:#4a4a4a;width:16px;text-align:center;line-height:16px;letter-spacing:0;-webkit-text-stroke:0.3px #4a4a4a">S</div>
<div class="t" style="left:442px;top:697px;font-size:11px;letter-spacing:0">Budget <span style="letter-spacing:0.9px">...</span></div>
<div class="ab" style="left:494px;top:694px;width:75px;height:19px;border-left:1px solid #fff;border-top:1px solid #fff"></div>
<div class="ab" style="left:568px;top:694px;width:1px;height:19px;background:#8a8a8a"></div>
<div class="ab" style="left:498px;top:696px;width:16px;height:15px;border:1px solid #8c8c8c;background:#fff"></div>
<div class="t" style="left:498px;top:696px;font-size:13px;font-weight:bold;color:#4a4a4a;width:16px;text-align:center;line-height:16px;letter-spacing:0;-webkit-text-stroke:0.3px #4a4a4a">S</div>
<div class="t" style="left:517px;top:697px;font-size:11px;letter-spacing:0">Busines<span style="letter-spacing:0.9px">...</span></div>
<div class="ab" style="left:569px;top:694px;width:75px;height:19px;border-left:1px solid #fff;border-top:1px solid #fff"></div>
<div class="ab" style="left:643px;top:694px;width:1px;height:19px;background:#8a8a8a"></div>
<div class="ab" style="left:573px;top:696px;width:16px;height:15px;border:1px solid #8c8c8c;background:#fff"></div>
<div class="t" style="left:573px;top:696px;font-size:13px;font-weight:bold;color:#4a4a4a;width:16px;text-align:center;line-height:16px;letter-spacing:0;-webkit-text-stroke:0.3px #4a4a4a">S</div>
<div class="t" style="left:592px;top:697px;font-size:11px;letter-spacing:0">Busines<span style="letter-spacing:0.9px">...</span></div>
<div class="ab" style="left:644px;top:694px;width:75px;height:19px;border-left:1px solid #fff;border-top:1px solid #fff"></div>
<div class="ab" style="left:718px;top:694px;width:1px;height:19px;background:#8a8a8a"></div>
<div class="ab" style="left:648px;top:696px;width:16px;height:15px;border:1px solid #8c8c8c;background:#fff"></div>
<div class="t" style="left:648px;top:696px;font-size:13px;font-weight:bold;color:#4a4a4a;width:16px;text-align:center;line-height:16px;letter-spacing:0;-webkit-text-stroke:0.3px #4a4a4a">S</div>
<div class="t" style="left:667px;top:697px;font-size:11px;letter-spacing:0">Busines<span style="letter-spacing:0.9px">...</span></div>
<div class="ab" style="left:719px;top:694px;width:69px;height:19px;border-left:1px solid #fff;border-top:1px solid #fff"></div>
<div class="ab" style="left:723px;top:696px;width:16px;height:15px;border:1px solid #8c8c8c;background:#fff"></div>
<div class="t" style="left:723px;top:696px;font-size:13px;font-weight:bold;color:#4a4a4a;width:16px;text-align:center;line-height:16px;letter-spacing:0;-webkit-text-stroke:0.3px #4a4a4a">D</div>
<div class="t" style="left:742px;top:697px;font-size:11px;letter-spacing:0">Calend<span style="letter-spacing:0.9px">...</span></div>
<div class="ab" style="left:120px;top:944px;width:667px;height:16px;background:#f0f0f0"></div>
<div class="ab" style="left:120px;top:943px;width:667px;height:1px;background:#fff"></div>
<div class="ab" style="left:136px;top:944px;width:94px;height:15px;background:#cdcdcd"></div>
<svg class="ab" style="left:124px;top:947px" width="6" height="10"><path d="M5 1 L1 5 L5 9" stroke="#606060" stroke-width="1.6" fill="none"/></svg>
<svg class="ab" style="left:776px;top:947px" width="6" height="10"><path d="M1 1 L5 5 L1 9" stroke="#606060" stroke-width="1.6" fill="none"/></svg>
<svg class="ab" style="left:255px;top:650px" width="400" height="50" viewBox="255 650 400 50"><defs><filter id="sh" x="-5%" y="-50%" width="110%" height="200%"><feGaussianBlur stdDeviation="1.2"/></filter></defs><path d="M270 677.5 L300 663 L299 673 L633 673 A4.85 4.85 0 0 1 633 682.7 L299 682.7 L300 692.5Z" fill="#000" opacity="0.18" filter="url(#sh)"/><path d="M267 675.3 L298 660.3 L297 670.6 L632 670.6 A4.85 4.85 0 0 1 632 680.3 L297 680.3 L298 690.3Z" fill="#fd4245" stroke="#fd4245" stroke-width="0.6" stroke-linejoin="round"/></svg>
</body></html>
